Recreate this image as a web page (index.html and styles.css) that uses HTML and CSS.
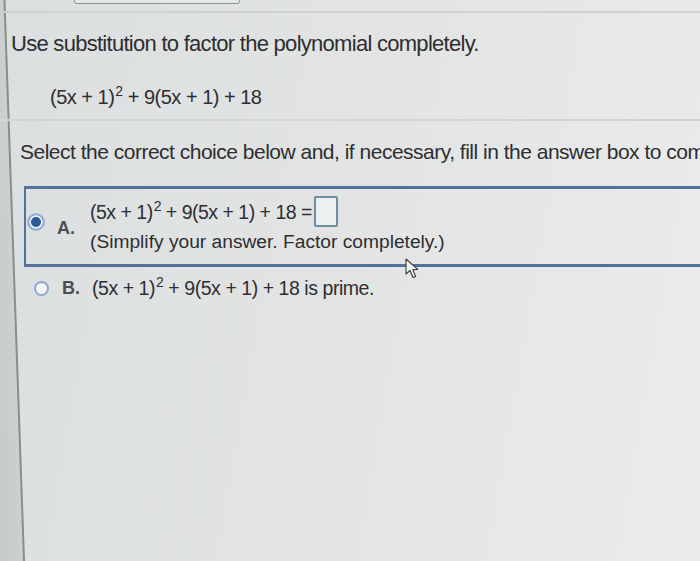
FILE: index.html
```html
<!DOCTYPE html>
<html>
<head>
<meta charset="utf-8">
<link rel="stylesheet" href="styles.css">
</head>
<body>
<div class="screen">
  <div class="topbar"><div class="tab"></div></div>
  <div class="question">
    <p class="prompt">Use substitution to factor the polynomial completely.</p>
    <p class="expr">(5x + 1)<sup>2</sup> + 9(5x + 1) + 18</p>
  </div>
  <div class="instructions">
    <p>Select the correct choice below and, if necessary, fill in the answer box to complete your choice.</p>
  </div>
  <div class="choices">
    <div class="choice selected">
      <span class="radio on"></span>
      <span class="letter">A.</span>
      <div class="body">
        <div class="line first">(5x + 1)<sup>2</sup> + 9(5x + 1) + 18 = <span class="answer"></span></div>
        <div class="line hint">(Simplify your answer. Factor completely.)</div>
      </div>
    </div>
    <div class="choice b">
      <span class="radio"></span>
      <span class="letter">B.</span>
      <div class="body">
        <div class="line">(5x + 1)<sup>2</sup> + 9(5x + 1) + 18 is prime.</div>
      </div>
    </div>
  </div>
  <svg class="cursor" width="18" height="22" viewBox="0 0 18 22"><path d="M1 1 L1 16 L5 12.5 L8 19.5 L10.7 18.4 L7.8 11.7 L12.8 11.4 Z" fill="#f2f3f3" stroke="#3a3d40" stroke-width="1.1" stroke-linejoin="round"/></svg>
</div>
</body>
</html>
```
FILE: styles.css
```css
html, body {
  margin: 0;
  padding: 0;
}
body {
  width: 700px;
  height: 561px;
  overflow: hidden;
  font-family: "Liberation Sans", Arial, sans-serif;
  color: #2d2e31;
  background: #e4e6e6;
}
.screen {
  position: relative;
  height: 561px;
  overflow: hidden;
  background:
    linear-gradient(88deg, #c6c9c9 0, #cdd0d0 22.5px, #8a8d8e 23.5px, #8a8d8e 24.5px, rgba(220,223,223,0) 25.5px),
    linear-gradient(100deg, #dcdfdf 0%, #e2e4e4 45%, #eaeceb 100%);
}
.topbar {
  height: 11px;
  border-bottom: 2px solid #d0d2d2;
  position: relative;
}
.tab {
  position: absolute;
  left: 74px;
  top: -5px;
  width: 164px;
  height: 7px;
  border: 1px solid #8f9293;
  border-radius: 3px;
  background: #e6e8e8;
}
.question {
  padding: 0 0 10px 11px;
  border-bottom: 2px solid #d3d5d5;
}
.prompt {
  margin: 0;
  padding-top: 18px;
  font-size: 22px;
  letter-spacing: -0.72px;
  line-height: 26px;
  white-space: nowrap;
}
.expr {
  margin: 0;
  padding: 28px 0 0 39px;
  font-size: 20px;
  letter-spacing: -0.5px;
  line-height: 24px;
  white-space: nowrap;
}
sup {
  font-size: 14px;
  line-height: 0;
  vertical-align: 8px;
  margin-left: 1px;
}
.instructions p {
  margin: 0;
  padding: 18px 0 0 20px;
  font-size: 21px;
  letter-spacing: -0.5px;
  line-height: 26px;
  white-space: nowrap;
}
.choices {
  padding-top: 21px;
}
.choice {
  display: flex;
  align-items: flex-start;
}
.choice.selected {
  margin-left: 24px;
  border-top: 3px solid #52729c;
  border-bottom: 3px solid #52729c;
  border-left: 2px solid #52729c;
  padding: 7px 0 8px 1px;
}
.radio {
  width: 15px;
  height: 15px;
  border-radius: 50%;
  border: 2px solid #8ea9ca;
  background: #f3f5f6;
  box-sizing: border-box;
  flex: none;
}
.radio.on {
  width: 18px;
  height: 18px;
  margin-top: 17px;
  border: 2px solid #9ab3d3;
  background: #2c579a;
  box-shadow: inset 0 0 0 2px #e9eef5;
}
.letter {
  font-size: 18px;
  font-weight: bold;
  color: #4a4e55;
  width: 33px;
  line-height: 22px;
}
.selected .letter {
  margin-left: 12px;
  margin-top: 21px;
}
.line {
  font-size: 19.5px;
  letter-spacing: -0.5px;
  line-height: 28px;
  white-space: nowrap;
}
.line.first {
  line-height: 32px;
}
.line.hint {
  font-size: 19.2px;
  letter-spacing: 0;
}
.answer {
  display: inline-block;
  width: 20px;
  height: 27px;
  border: 2px solid #6c8f9f;
  border-radius: 2px;
  vertical-align: -8px;
  margin-left: -3px;
  background: #edf0f0;
}
.choice.b {
  padding: 9px 0 0 34px;
  align-items: center;
}
.choice.b .letter {
  margin-left: 13px;
  width: 30px;
}
.choice.b .line {
  letter-spacing: -0.45px;
  line-height: 24px;
}
.cursor {
  position: absolute;
  left: 405px;
  top: 258px;
}
```
